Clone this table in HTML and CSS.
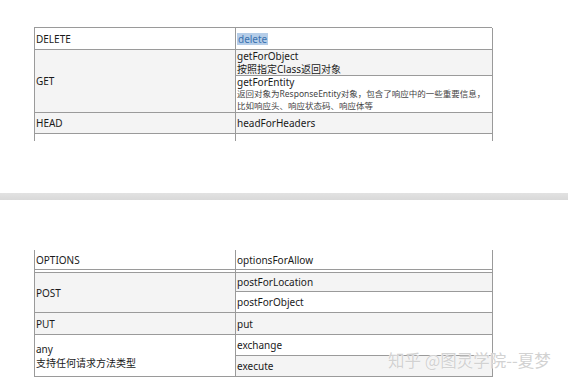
FILE: index.html
```html
<!DOCTYPE html>
<html>
<head>
<meta charset="utf-8">
<link rel="stylesheet" href="styles.css">
</head>
<body>
<div class="page page1">
  <div class="tbl t1">
    <div class="c">DELETE</div>
    <div class="c"><span class="sel">delete</span></div>
    <div class="c gray span2">GET</div>
    <div class="c gray col two">
      <span>getForObject</span>
      <span>按照指定Class返回对象</span>
    </div>
    <div class="c col top">
      <span>getForEntity</span>
      <span class="small">返回对象为ResponseEntity对象，包含了响应中的一些重要信息，</span>
      <span class="small">比如响应头、响应状态码、响应体等</span>
    </div>
    <div class="c gray">HEAD</div>
    <div class="c gray">headForHeaders</div>
    <div class="c stub"></div>
    <div class="c stub"></div>
  </div>
</div>
<div class="band"></div>
<div class="page page2">
  <div class="tbl t2">
    <div class="c">OPTIONS</div>
    <div class="c">optionsForAllow</div>
    <div class="c gap"></div>
    <div class="c gap"></div>
    <div class="c gray span2">POST</div>
    <div class="c gray">postForLocation</div>
    <div class="c">postForObject</div>
    <div class="c gray">PUT</div>
    <div class="c gray">put</div>
    <div class="c span2 col mid">
      <span>any</span>
      <span>支持任何请求方法类型</span>
    </div>
    <div class="c">exchange</div>
    <div class="c gray">execute</div>
  </div>
  <div class="mark">知乎 @图灵学院--夏梦</div>
</div>
</body>
</html>
```
FILE: styles.css
```css
html, body {
  margin: 0;
  padding: 0;
  background: #fff;
}
body {
  font-family: "Noto Sans", "Open Sans", "Noto Sans CJK SC", sans-serif;
  font-size: 10px;
  color: #1a1a1a;
  width: 568px;
  height: 384px;
  overflow: hidden;
}
.page {
  position: relative;
}
.page1 {
  height: 193px;
  padding-top: 27px;
  box-sizing: border-box;
}
.band {
  height: 7px;
  background: linear-gradient(#e2e2e2, #d9d9d9);
}
.page2 {
  height: 184px;
  padding-top: 50px;
  box-sizing: border-box;
}
.tbl {
  display: grid;
  grid-template-columns: 201px 257px;
  width: 458px;
  margin-left: 34px;
  border-left: 1px solid #9a9a9a;
  box-sizing: border-box;
}
.t1 {
  border-top: 1px solid #9a9a9a;
  grid-template-rows: 22px 26px 37px 21px 7px;
}
.t2 {
  grid-template-rows: 20px 3px 19px 21px 22px 21px 21px;
}
.c {
  box-sizing: border-box;
  border-right: 1px solid #9a9a9a;
  border-bottom: 1px solid #9a9a9a;
  display: flex;
  align-items: center;
  padding-left: 1px;
  white-space: nowrap;
  line-height: 12px;
  background: #fff;
}
.gray {
  background: #f4f4f4;
}
.span2 {
  grid-row: span 2;
}
.col {
  flex-direction: column;
  align-items: flex-start;
  justify-content: center;
}
.two {
  line-height: 13px;
}
.top {
  justify-content: flex-start;
  padding-top: 0;
  line-height: 12px;
}
.small {
  font-size: 8.5px;
  line-height: 12px;
  color: #444;
}
.stub {
  border-bottom: none;
}
.gap {
  background: #fff;
}
.sel {
  background: #b5cde8;
  color: #3a72b0;
  padding: 0 1px;
  line-height: 12px;
}
.mid {
  justify-content: center;
  line-height: 14px;
}
.mark {
  position: absolute;
  left: 388px;
  top: 150px;
  font-family: "Noto Sans CJK SC", sans-serif;
  font-size: 16.5px;
  line-height: 20px;
  color: #d2d2d2;
  text-shadow: 0 0 1px #fff, 0 0 1px #fff;
  white-space: nowrap;
}
```
